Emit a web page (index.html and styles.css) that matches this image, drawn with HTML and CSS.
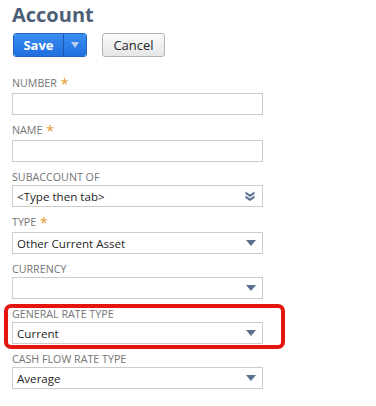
FILE: index.html
```html
<!DOCTYPE html>
<html>
<head>
<meta charset="utf-8">
<link rel="stylesheet" href="styles.css">
</head>
<body>
<div class="page">
  <h1 class="title">Account</h1>
  <div class="actions">
    <div class="save-group">
      <button class="btn-save">Save</button>
      <button class="btn-save-menu"><span class="tri-small"></span></button>
    </div>
    <button class="btn-cancel">Cancel</button>
  </div>

  <div class="form">
    <div class="field">
      <div class="label">NUMBER <span class="req">*</span></div>
      <div class="input"></div>
    </div>
    <div class="field">
      <div class="label">NAME <span class="req">*</span></div>
      <div class="input"></div>
    </div>
    <div class="field">
      <div class="label">SUBACCOUNT OF</div>
      <div class="input select"><span class="val">&lt;Type then tab&gt;</span>
        <svg class="dbl" width="10" height="10" viewBox="0 0 10 10"><path d="M0.5 0.5 L5 3.5 L9.5 0.5 L9.5 3 L5 6 L0.5 3 Z M0.5 4.5 L5 7.5 L9.5 4.5 L9.5 7 L5 10 L0.5 7 Z" fill="#5b6f8f"/></svg>
      </div>
    </div>
    <div class="field">
      <div class="label">TYPE <span class="req">*</span></div>
      <div class="input select"><span class="val">Other Current Asset</span><span class="arrow"></span></div>
    </div>
    <div class="field">
      <div class="label">CURRENCY</div>
      <div class="input select"><span class="val"></span><span class="arrow"></span></div>
    </div>
    <div class="field highlight">
      <div class="label">GENERAL RATE TYPE</div>
      <div class="input select"><span class="val">Current</span><span class="arrow"></span></div>
    </div>
    <div class="field">
      <div class="label">CASH FLOW RATE TYPE</div>
      <div class="input select"><span class="val">Average</span><span class="arrow"></span></div>
    </div>
  </div>
</div>
</body>
</html>
```

FILE: styles.css
```css
html, body {
  margin: 0;
  padding: 0;
  background: #ffffff;
}
body {
  font-family: "Open Sans", "Liberation Sans", sans-serif;
  width: 376px;
  height: 406px;
  overflow: hidden;
}
.page {
  padding: 0 0 0 12px;
}
.title {
  margin: 0;
  font-size: 20px;
  line-height: 30px;
  font-weight: 700;
  color: #4d5e76;
}
.actions {
  display: flex;
  align-items: center;
  margin-top: 3px;
  padding-left: 1px;
  gap: 15px;
}
.save-group {
  display: flex;
  height: 24px;
  border: 1px solid #1f63c9;
  border-radius: 3px;
  overflow: hidden;
  box-sizing: border-box;
}
.btn-save, .btn-save-menu {
  border: none;
  margin: 0;
  background: linear-gradient(#3a8df0, #1f6fe0);
  color: #fff;
  font-family: "Open Sans", "Liberation Sans", sans-serif;
  font-weight: 700;
  font-size: 13px;
  padding: 0;
  height: 22px;
}
.btn-save {
  width: 50px;
  border-right: 1px solid #1a56b0;
}
.btn-save-menu {
  width: 22px;
  display: flex;
  align-items: center;
  justify-content: center;
}
.tri-small {
  width: 0;
  height: 0;
  border-left: 4px solid transparent;
  border-right: 4px solid transparent;
  border-top: 6px solid #b9cdf0;
}
.btn-cancel {
  height: 24px;
  width: 63px;
  box-sizing: border-box;
  border: 1px solid #b3b3b3;
  border-radius: 3px;
  background: linear-gradient(#fafafa, #e6e6e6);
  color: #262626;
  font-family: "Open Sans", "Liberation Sans", sans-serif;
  font-size: 13px;
  padding: 0;
}
.form {
  margin-top: 18px;
  display: flex;
  flex-direction: column;
  gap: 7px;
}
.field {
  position: relative;
  width: 251px;
}
.label {
  font-size: 10.7px;
  line-height: 16px;
  min-height: 16px;
  color: #757575;
}
.req {
  display: inline-block;
  vertical-align: top;
  color: #e3962a;
  font-size: 14px;
  line-height: 18px;
  margin-left: 1px;
}
.input {
  height: 22px;
  border: 1px solid #cccccc;
  box-sizing: border-box;
  background: #fff;
  display: flex;
  align-items: center;
  padding: 0 4px;
  font-size: 11.6px;
  color: #262626;
}
.select .val {
  flex: 1;
}
.arrow {
  width: 0;
  height: 0;
  border-left: 5px solid transparent;
  border-right: 5px solid transparent;
  border-top: 6px solid #5b6f8f;
  margin-right: 2px;
}
.dbl {
  margin-right: 3px;
}
.highlight::after {
  content: "";
  position: absolute;
  left: -8px;
  right: -22px;
  top: -2px;
  bottom: -5px;
  border: 4px solid #e3170f;
  border-radius: 7px;
  pointer-events: none;
}
```
